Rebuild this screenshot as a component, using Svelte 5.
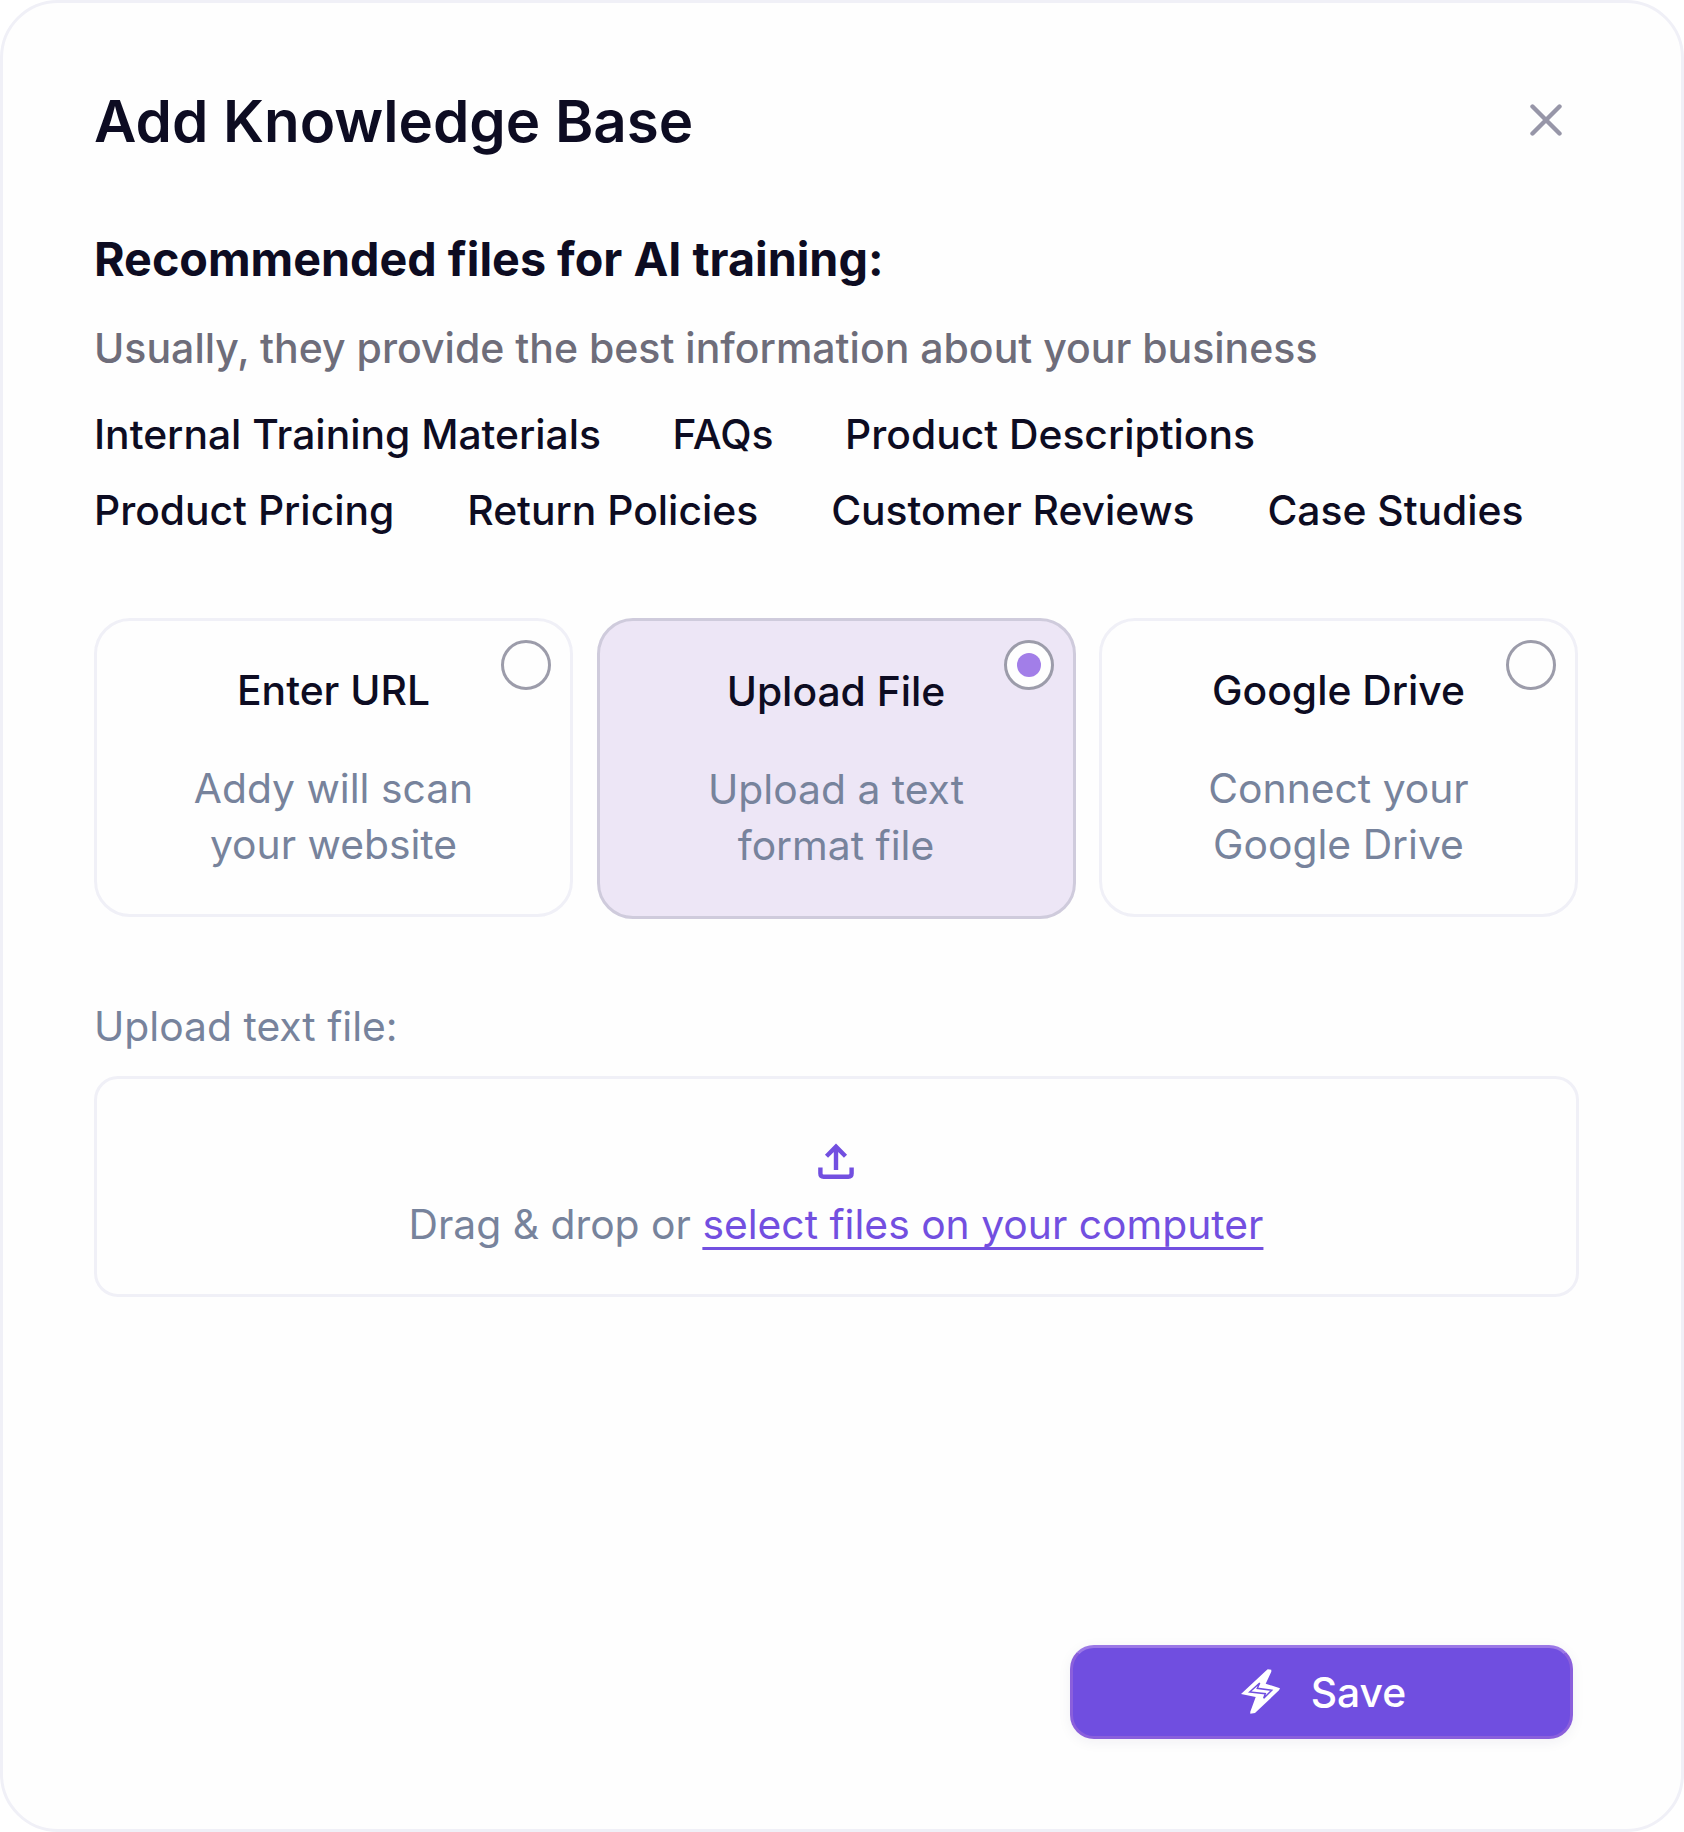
<script>
  const rows = [
    ['Internal Training Materials', 'FAQs', 'Product Descriptions'],
    ['Product Pricing', 'Return Policies', 'Customer Reviews', 'Case Studies'],
  ];
  const options = [
    { id: 'url', title: 'Enter URL', lines: ['Addy will scan', 'your website'] },
    { id: 'file', title: 'Upload File', lines: ['Upload a text', 'format file'] },
    { id: 'drive', title: 'Google Drive', lines: ['Connect your', 'Google Drive'] },
  ];
  let selected = $state('file');
</script>

<main class="modal">
  <header>
    <h1>Add Knowledge Base</h1>
    <button class="close" aria-label="Close">
      <svg width="32" height="32" viewBox="0 0 32 32"><path d="M2.5 2.5 29.5 29.5M29.5 2.5 2.5 29.5" /></svg>
    </button>
  </header>

  <h2>Recommended files for AI training:</h2>
  <p class="hint">Usually, they provide the best information about your business</p>
  <div class="tags">
    {#each rows as row, r}
      <ul class="row{r + 1}">
        {#each row as tag}<li>{tag}</li>{/each}
      </ul>
    {/each}
  </div>

  <section class="options">
    {#each options as o}
      <button class="card" class:selected={selected === o.id} onclick={() => (selected = o.id)}>
        <span class="radio"></span>
        <span class="name">{o.title}</span>
        <span class="desc">{o.lines[0]}<br />{o.lines[1]}</span>
      </button>
    {/each}
  </section>

  <p class="label">Upload text file:</p>
  <section class="drop">
    <svg width="36" height="36" viewBox="0 0 36 36">
      <path d="M18 27V4M8.500 13.200 18 3.700 27.500 13.200M2.400 24.500V30.500Q2.400 33.700 5.600 33.700H30.400Q33.600 33.700 33.600 30.500V24.500" />
    </svg>
    <p>Drag &amp; drop or <span class="link">select files on your computer</span></p>
  </section>

  <footer>
    <button class="save">
      <svg width="40" height="46" viewBox="0 0 40 46">
        <path class="bolt" d="M0 25 24.700 2 26.700.3 30.300.7V2.700L24.700 14.700 39 19.300 38 21.300 14 44 9.300 44.700V42.700L14.700 28Z" />
        <path class="inner" d="M8.700 23 18.700 14 16.300 19.300 30.700 21.300 22.700 29.300 24.300 24.700Z" />
      </svg>
      <span>Save</span>
    </button>
  </footer>
</main>

<style>
  :global(body) { margin: 0; background: #fff; }
  .modal {
    box-sizing: border-box;
    width: 1684px;
    height: 1832px;
    border: 3px solid #f0f0f7;
    border-radius: 58px;
    background: #fefefe;
    padding: 82px 102px 0 91px;
    font-family: Inter, sans-serif;
    font-size: 40.8px;
    color: #0d0c22;
    display: flex;
    flex-direction: column;
  }
  h1, h2, p, ul { margin: 0; padding: 0; white-space: nowrap; }
  button { font: inherit; color: inherit; border: 0; background: none; padding: 0; }
  svg { display: block; fill: none; }
  header { display: flex; justify-content: space-between; align-items: center; height: 72px; }
  h1 { font-size: 58.3px; font-weight: 600; line-height: 72px; }
  .close { margin: 0 17px 2px 0; }
  .close path { stroke: #9796a8; stroke-width: 4.4; stroke-linecap: round; }
  h2 { margin-top: 73px; font-size: 46.7px; font-weight: 700; line-height: 58px; }
  .hint { margin-top: 35px; font-size: 41px; line-height: 50px; font-weight: 480; color: #6e6d7a; }
  .tags { margin-top: 23px; font-weight: 500; }
  .tags ul { display: flex; list-style: none; height: 76px; line-height: 76px; }
  .row1 { gap: 71.5px; }
  .row2 { gap: 73px; }
  .options { display: flex; gap: 23.5px; margin-top: 70px; height: 303px; align-items: flex-start; }
  .card {
    position: relative;
    box-sizing: border-box;
    width: 479px;
    height: 299px;
    border: 3px solid #f0f0f7;
    border-radius: 36px;
    padding-top: 44px;
    display: flex;
    flex-direction: column;
    align-items: center;
    text-align: center;
  }
  .card.selected { height: 301px; padding-top: 45px; background: #ede6f6; border-color: #cfcbdc; }
  .name { line-height: 50px; font-weight: 500; }
  .desc { margin-top: 45px; line-height: 56px; color: #77839c; }
  .radio {
    position: absolute;
    top: 19px;
    right: 19px;
    box-sizing: border-box;
    width: 50px;
    height: 50px;
    border: 3px solid #9c9caa;
    border-radius: 50%;
    background: #fefefe;
    display: grid;
    place-items: center;
  }
  .selected .radio::after { content: ''; width: 24px; height: 24px; border-radius: 50%; background: #a27ee8; }
  .label { margin-top: 80px; line-height: 50px; color: #77839c; }
  .drop {
    box-sizing: border-box;
    width: 1485px;
    height: 221px;
    margin-top: 25px;
    border: 3px solid #f0f0f7;
    border-radius: 24px;
    display: flex;
    flex-direction: column;
    align-items: center;
    padding: 64px 1px 0 0;
    color: #77839c;
  }
  .drop path { stroke: #724fe0; stroke-width: 4.4; }
  .drop p { margin-top: 20px; line-height: 50px; }
  .link {
    color: #724fe0;
    text-decoration: underline;
    text-decoration-thickness: 3px;
    text-underline-offset: 8px;
    text-decoration-skip-ink: none;
  }
  footer { margin-top: 348px; display: flex; justify-content: flex-end; padding-right: 6px; }
  .save {
    box-sizing: border-box;
    width: 503px;
    height: 94px;
    border: 3px solid #8a5fdc;
    border-top-color: #9b78e6;
    border-radius: 24px;
    background: #704ee0;
    box-shadow: 0 3px 14px rgba(30, 20, 80, 0.06);
    color: #fff;
    display: flex;
    align-items: center;
    justify-content: center;
    gap: 30px;
    padding-left: 4px;
    font-weight: 500;
  }
  .bolt { fill: #fff; }
  .inner { fill: #fff; stroke: #704ee0; stroke-width: 1.5; }
</style>
